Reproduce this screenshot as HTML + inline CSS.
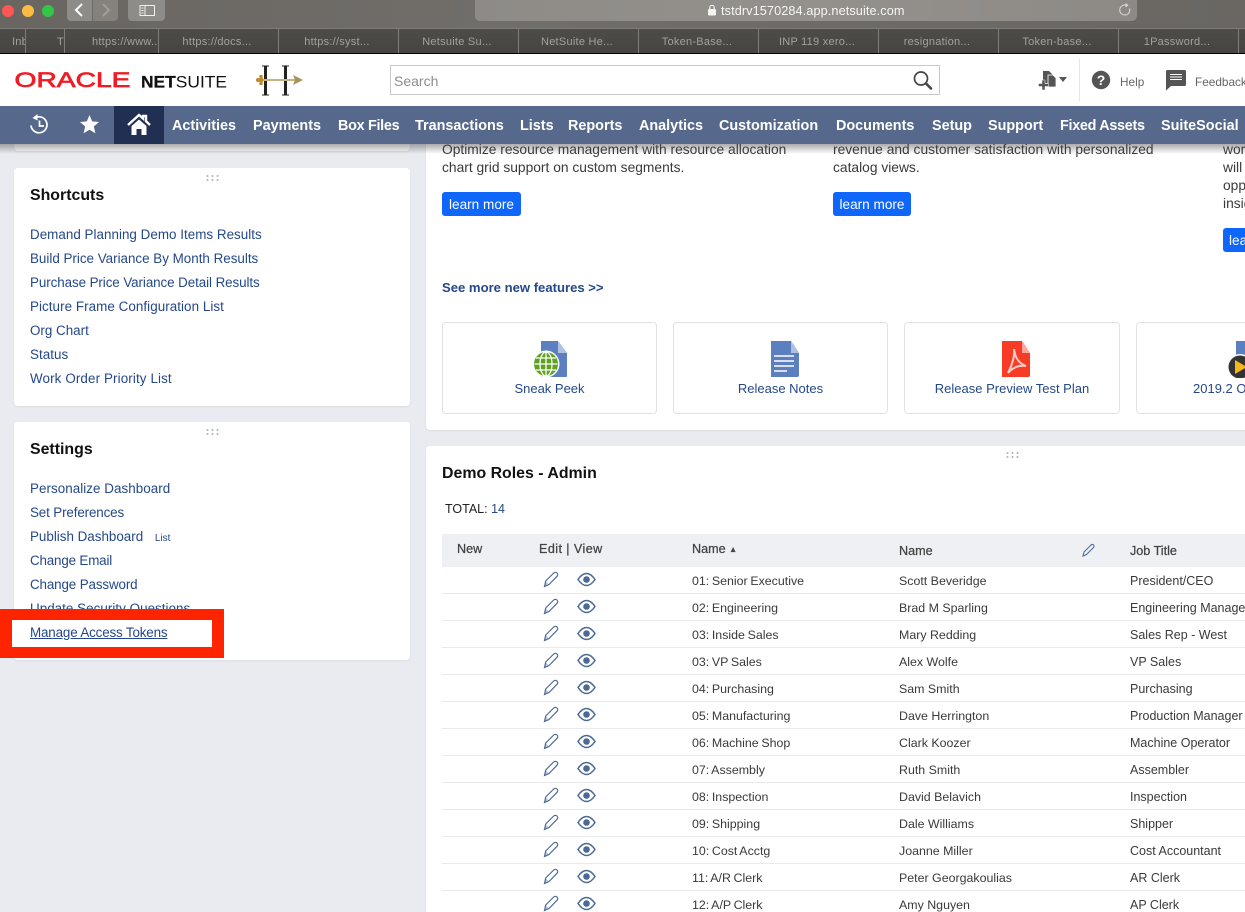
<!DOCTYPE html>
<html><head><meta charset="utf-8"><style>
*{box-sizing:border-box}
html,body{margin:0;padding:0;width:1245px;height:912px;overflow:hidden;background:#e9ebf0;font-family:"Liberation Sans",sans-serif}
#p{position:relative;width:1245px;height:912px;overflow:hidden}
.a{position:absolute}
.t{position:absolute;white-space:nowrap;line-height:20px;height:20px}
.tab{position:absolute;top:29px;height:24px;line-height:26px;color:#a3a19e;font-size:11px;white-space:nowrap;letter-spacing:.25px;overflow:hidden;text-align:center;border-right:1px solid #7f7d7a;padding-right:3px}
.n{position:absolute;top:116px;height:20px;line-height:20px;color:#fff;font-weight:bold;font-size:14.4px;white-space:nowrap}
.card{position:absolute;background:#fff;border-radius:4px;box-shadow:0 1px 2px rgba(0,0,0,.06)}
.l{position:absolute;left:30px;color:#24488a;font-size:13.4px;line-height:20px;white-space:nowrap;margin-top:1px}
.h{position:absolute;color:#111;font-size:15.9px;font-weight:bold;line-height:22px;white-space:nowrap;margin-top:1px}
.p{position:absolute;color:#3a3a3a;font-size:13.8px;line-height:18px;white-space:nowrap;margin-top:1px}
.b{position:absolute;height:24px;background:#0f66fa;color:#fff;border-radius:3px;font-size:13.6px;line-height:26px;text-align:center;white-space:nowrap}
.tile{position:absolute;top:322px;height:92px;border:1px solid #dfe1e5;border-radius:4px;background:#fff}
.tile span{position:absolute;left:0;right:0;top:56px;text-align:center;color:#24488a;font-size:13px;line-height:20px;white-space:nowrap}
.tile svg{position:absolute}
.r{position:absolute;left:442px;width:803px;height:27px;border-bottom:1px solid #e9eaee;font-size:12.4px;color:#3a3a3a}
.r b{position:absolute;font-weight:normal;top:4px;line-height:20px;white-space:nowrap}
.r b:nth-of-type(1){left:250px;word-spacing:-.8px}.r b:nth-of-type(2){left:457px}.r b:nth-of-type(3){left:688px;font-size:12.5px}
.r svg{position:absolute;top:4px}
.th{position:absolute;color:#444;font-size:12.6px;line-height:20px;white-space:nowrap;font-weight:normal;-webkit-text-stroke:.25px #444}
.grip{position:absolute;width:15px;height:8px;background-image:radial-gradient(circle,#b5b7bc 1px,transparent 1.1px);background-size:5px 4px}
</style></head><body><div id="p">

<div class="a" style="left:0;top:0;width:1245px;height:29px;background:linear-gradient(90deg,#696662,#716e6a 40%,#6a6763);border-bottom:1px solid #7d7b78"></div>
<div class="a" style="left:2px;top:5px;width:12px;height:12px;border-radius:50%;background:#fc5753"></div>
<div class="a" style="left:22px;top:5px;width:12px;height:12px;border-radius:50%;background:#fdbc40"></div>
<div class="a" style="left:42px;top:5px;width:12px;height:12px;border-radius:50%;background:#33c748"></div>
<div class="a" style="left:67px;top:0;width:25px;height:21px;background:#8e8c88;border-radius:0 0 0 4px"></div>
<div class="a" style="left:93px;top:0;width:25px;height:21px;background:#85827e;border-radius:0 0 4px 0"></div>
<div class="a" style="left:128px;top:0;width:37px;height:21px;background:#8e8c88;border-radius:0 0 4px 4px"></div>
<svg class="a" style="left:67px;top:0" width="100" height="21"><path d="M15 4 L9 10 L15 16" fill="none" stroke="#fff" stroke-width="2"/><path d="M36 4 L42 10 L36 16" fill="none" stroke="#a09e9a" stroke-width="2"/><path d="M73 5.5h14.500v10H73zM78 5.500v10M74.500 8h2M74.500 10.500h2M74.500 13h2" fill="none" stroke="#f0f0ef" stroke-width="1"/></svg>
<div class="a" style="left:475px;top:0;width:662px;height:21px;background:linear-gradient(90deg,#8e8b87,#94918d 50%,#8d8a86);border-radius:0 0 5px 5px"></div>
<svg class="a" style="left:707px;top:4px" width="11" height="12"><rect x="1" y="5" width="8" height="6.500" rx="1" fill="#f3f3f2"/><path d="M2.800 5V3.500a2.200 2.200 0 0 1 4.400 0V5" fill="none" stroke="#f3f3f2" stroke-width="1.200"/></svg>
<div class="t" style="left:721px;top:1px;color:#f6f6f5;font-size:12.700px;letter-spacing:.1px">tstdrv1570284.app.netsuite.com</div>
<svg class="a" style="left:1118px;top:3px" width="14" height="14"><path d="M11.500 5.500A5 5 0 1 1 8 2.200" fill="none" stroke="#dddcda" stroke-width="1"/><path d="M7.500 0v4.500L10.500 2.300z" fill="#dddcda"/></svg>

<div class="a" style="left:0;top:29px;width:1245px;height:24px;background:linear-gradient(#4e4c49,#474542)"></div>
<div class="tab" style="left:0;width:26px;text-align:left;padding-left:12px;padding-right:0">Inb</div>
<div class="tab" style="left:26px;width:39px;text-align:left;padding-left:31px;padding-right:0">T</div>
<div class="tab" style="left:65px;width:94px;padding-left:27px;padding-right:0;text-align:left">https://www...</div>
<div class="tab" style="left:159px;width:120px">https://docs...</div>
<div class="tab" style="left:279px;width:120px">https://syst...</div>
<div class="tab" style="left:399px;width:120px">Netsuite Su...</div>
<div class="tab" style="left:519px;width:120px">NetSuite He...</div>
<div class="tab" style="left:639px;width:120px">Token-Base...</div>
<div class="tab" style="left:759px;width:120px">INP 119 xero...</div>
<div class="tab" style="left:879px;width:120px">resignation...</div>
<div class="tab" style="left:999px;width:120px">Token-base...</div>
<div class="tab" style="left:1119px;width:120px">1Password...</div>
<div class="a" style="left:0;top:53px;width:1245px;height:1px;background:#000"></div>

<div class="a" style="left:0;top:54px;width:1245px;height:52px;background:#fff"></div>
<svg class="a" style="left:0;top:54px" width="330" height="52">
<text x="14.500" y="33" font-family="Liberation Sans" font-size="21.500" fill="#ee1c25" stroke="#ee1c25" stroke-width=".7" textLength="116" lengthAdjust="spacingAndGlyphs">ORACLE</text>
<text x="141" y="33.500" font-family="Liberation Sans" font-size="17" fill="#111" textLength="86" lengthAdjust="spacingAndGlyphs"><tspan font-weight="bold" stroke="#111" stroke-width=".3">NET</tspan>SUITE</text>
<rect x="264" y="12" width="3" height="29" fill="#222"/><rect x="284" y="12" width="3" height="29" fill="#222"/>
<rect x="262" y="11.500" width="7" height="1" fill="#222"/><rect x="262" y="40.500" width="7" height="1" fill="#222"/><rect x="282" y="11.500" width="7" height="1" fill="#222"/><rect x="282" y="40.500" width="7" height="1" fill="#222"/>
<rect x="262" y="25" width="34" height="2" fill="#c4b184"/>
<circle cx="261" cy="26" r="2.500" fill="#c4872a"/><circle cx="258" cy="26" r="2" fill="#c4872a"/><circle cx="261" cy="22.500" r="1.800" fill="#c4872a"/><circle cx="261" cy="29.500" r="1.800" fill="#c4872a"/>
<path d="M293 21l10 5-10 5 2-5z" fill="#a8925e"/>
</svg>
<div class="a" style="left:390px;top:65px;width:550px;height:30px;border:1px solid #c9c9c9;background:#fff"></div>
<div class="t" style="left:394px;top:71px;color:#8d8d8d;font-size:14px">Search</div>
<svg class="a" style="left:911px;top:69px" width="24" height="22"><circle cx="10" cy="9.500" r="6.500" fill="none" stroke="#444" stroke-width="1.700"/><path d="M15 14.500l5 5" stroke="#444" stroke-width="2.600" stroke-linecap="round"/></svg>
<svg class="a" style="left:1037px;top:69px" width="32" height="24"><path d="M6 2h6l4 4v8H6z" fill="#555"/><path d="M11 6h5l3 3v9h-8z" fill="#555" stroke="#fff" stroke-width=".8"/><path d="M5 11h3v3.500h3.500v3H8V21H5v-3.500H1.500v-3H5z" fill="#555" stroke="#fff" stroke-width=".5"/><path d="M22 8h8l-4 5z" fill="#555"/></svg>
<div class="a" style="left:1079px;top:59px;width:1px;height:42px;background:#e4e4e4"></div>
<svg class="a" style="left:1091px;top:70px" width="20" height="20"><circle cx="10" cy="10" r="9.200" fill="#555"/><text x="10" y="15" text-anchor="middle" font-family="Liberation Sans" font-weight="bold" font-size="14" fill="#fff">?</text></svg>
<div class="t" style="left:1120px;top:72px;color:#666;font-size:11.800px">Help</div>
<svg class="a" style="left:1165px;top:69px" width="23" height="22"><path d="M2.500 1h17A1.500 1.500 0 0 1 21 2.500v13a1.500 1.500 0 0 1-1.500 1.500H6L1 21.500V2.500A1.500 1.500 0 0 1 2.500 1z" fill="#555"/><path d="M5 5.500h12M5 8h12M5 10.500h12" stroke="#fff" stroke-width="1"/></svg>
<div class="t" style="left:1195px;top:72px;color:#666;font-size:11.800px">Feedback</div>

<!-- Cards -->
<div class="card" style="left:14px;top:130px;width:396px;height:21px"></div>
<div class="card" style="left:14px;top:168px;width:396px;height:238px"></div>
<div class="grip" style="left:205px;top:174px"></div>
<div class="h" style="left:30px;top:184px">Shortcuts</div>
<div class="l" style="top:224px;letter-spacing:.03px">Demand Planning Demo Items Results</div>
<div class="l" style="top:248px">Build Price Variance By Month Results</div>
<div class="l" style="top:272px;letter-spacing:-.08px">Purchase Price Variance Detail Results</div>
<div class="l" style="top:296px;letter-spacing:.06px">Picture Frame Configuration List</div>
<div class="l" style="top:320px">Org Chart</div>
<div class="l" style="top:344px;letter-spacing:.05px">Status</div>
<div class="l" style="top:368px;letter-spacing:.12px">Work Order Priority List</div>

<div class="card" style="left:14px;top:422px;width:396px;height:238px"></div>
<div class="grip" style="left:205px;top:428px"></div>
<div class="h" style="left:30px;top:438px">Settings</div>
<div class="l" style="top:478px;letter-spacing:.05px">Personalize Dashboard</div>
<div class="l" style="top:502px;letter-spacing:-.13px">Set Preferences</div>
<div class="l" style="top:526px">Publish Dashboard <span style="font-size:10px;margin-left:8px">List</span></div>
<div class="l" style="top:550px;letter-spacing:-.17px">Change Email</div>
<div class="l" style="top:574px;letter-spacing:-.13px">Change Password</div>
<div class="l" style="top:598px;letter-spacing:.04px">Update Security Questions</div>
<div class="a" style="left:0;top:609px;width:224px;height:49px;border:12px solid #ff2400;border-top-width:11px;border-bottom-width:11px;background:#fff"></div>
<div class="l" style="top:622px;text-decoration:underline;letter-spacing:-.15px">Manage Access Tokens</div>

<div class="card" style="left:426px;top:130px;width:830px;height:300px"></div>
<div class="p" style="left:442px;top:140px">Optimize resource management with resource allocation</div>
<div class="p" style="left:442px;top:158px">chart grid support on custom segments.</div>
<div class="b" style="left:442px;top:192px;width:79px">learn more</div>
<div class="p" style="left:833px;top:140px">revenue and customer satisfaction with personalized</div>
<div class="p" style="left:833px;top:158px">catalog views.</div>
<div class="b" style="left:833px;top:192px;width:78px">learn more</div>
<div class="p" style="left:1223px;top:140px">work</div>
<div class="p" style="left:1223px;top:158px">will</div>
<div class="p" style="left:1223px;top:176px">opp</div>
<div class="p" style="left:1223px;top:194px">insig</div>
<div class="b" style="left:1223px;top:228px;width:60px;text-align:left;padding-left:6px">learn more</div>
<div class="p" style="left:442px;top:278px;color:#24488a;font-weight:bold;font-size:13.100px">See more new features &gt;&gt;</div>

<div class="tile" style="left:442px;width:215px"><svg style="left:88px;top:17px" width="40" height="38"><path d="M10 1h17l9 12v23a1 1 0 0 1-1 1H10z" fill="#5b7fbf"/><path d="M27 1l9 12h-9z" fill="#aec1e0"/><circle cx="15" cy="24" r="13.500" fill="#fff"/><circle cx="15" cy="24" r="12" fill="#5fa21f"/><g fill="none" stroke="#fff" stroke-width="1.300"><ellipse cx="15" cy="24" rx="6" ry="12"/><path d="M15 12v24M3.500 24h23M5 18h20M5 30h20"/></g></svg><span>Sneak Peek</span></div>
<div class="tile" style="left:673px;width:215px"><svg style="left:96px;top:17px" width="30" height="38"><path d="M1 1h20l8 12v22a2 2 0 0 1-2 2H1z" fill="#5b7fbf"/><path d="M21 1l8 12h-8z" fill="#aec1e0"/><path d="M4 15h20v2H4zM4 20h20v2H4zM4 25h20v2H4zM4 30h13v2H4z" fill="#d6e0f0"/></svg><span>Release Notes</span></div>
<div class="tile" style="left:904px;width:216px"><svg style="left:96px;top:17px" width="30" height="38"><path d="M1 1h20l8 12v22a2 2 0 0 1-2 2H1z" fill="#f73c26"/><path d="M21 1l8 12h-8z" fill="#fba79c"/><path d="M13 9c1 8 4 14 12 17-7-1-13 1-18 7 3-6 7-16 6-24z" fill="none" stroke="#fbcfc8" stroke-width="2"/></svg><span>Release Preview Test Plan</span></div>
<div class="tile" style="left:1136px;width:215px"><svg style="left:88px;top:17px" width="40" height="38"><path d="M11 1h17l9 12v23a1 1 0 0 1-1 1H11z" fill="#5b7fbf"/><circle cx="15" cy="27" r="13" fill="#fff"/><circle cx="15" cy="27" r="11.500" fill="#333"/><path d="M10 20l12 7-12 7z" fill="#f5b81c"/></svg><span style="left:56px;right:auto;text-align:left">2019.2 Overview</span></div>

<!-- Roles -->
<div class="card" style="left:426px;top:446px;width:830px;height:480px"></div>
<div class="grip" style="left:1005px;top:451px"></div>
<div class="h" style="left:442px;top:462px">Demo Roles - Admin</div>
<div class="t" style="left:445px;top:499px;color:#222;font-size:12.500px">TOTAL: <span style="color:#24488a">14</span></div>
<div class="a" style="left:442px;top:534px;width:803px;height:33px;background:#eff0f4"></div>
<div class="th" style="left:457px;top:539px">New</div>
<div class="th" style="left:539px;top:539px;letter-spacing:.42px">Edit | View</div>
<div class="th" style="left:692px;top:539px">Name <span style="font-size:8px;vertical-align:1px">▲</span></div>
<div class="th" style="left:899px;top:541px">Name</div>
<svg class="a" style="left:1081px;top:543px" width="15" height="15"><path d="M2 13l1-4L10 2a1.500 1.500 0 0 1 2.500 2.500L5.500 11.500z" fill="none" stroke="#52709c" stroke-width="1.100"/></svg>
<div class="th" style="left:1130px;top:541px">Job Title</div>

<svg width="0" height="0" style="position:absolute"><defs>
<g id="pen"><path d="M1.500 15.500L2.700 10 10.700 2a2.200 2.200 0 0 1 3.300 3.300L6 13.500z" fill="none" stroke="#4c6a96" stroke-width="1.200"/><path d="M1.500 15.500L2.700 10l3.300 3.500z" fill="#4c6a96" fill-opacity=".35"/></g>
<g id="eye"><path d="M1 7.500C4 3 7 1.500 9.500 1.500S15 3 18 7.500C15 12 12 13.500 9.500 13.500S4 12 1 7.500z" fill="none" stroke="#4c6a96" stroke-width="1.500"/><circle cx="9.500" cy="7.500" r="3.300" fill="#4c6a96"/></g>
</defs></svg>

<div class="r" style="top:567px"><svg style="left:101px" width="18" height="18"><use href="#pen"/></svg><svg style="left:135px;top:5px" width="19" height="15"><use href="#eye"/></svg><b>01: Senior Executive</b><b>Scott Beveridge</b><b>President/CEO</b></div>
<div class="r" style="top:594px"><svg style="left:101px" width="18" height="18"><use href="#pen"/></svg><svg style="left:135px;top:5px" width="19" height="15"><use href="#eye"/></svg><b>02: Engineering</b><b>Brad M Sparling</b><b>Engineering Manager</b></div>
<div class="r" style="top:621px"><svg style="left:101px" width="18" height="18"><use href="#pen"/></svg><svg style="left:135px;top:5px" width="19" height="15"><use href="#eye"/></svg><b>03: Inside Sales</b><b>Mary Redding</b><b>Sales Rep - West</b></div>
<div class="r" style="top:648px"><svg style="left:101px" width="18" height="18"><use href="#pen"/></svg><svg style="left:135px;top:5px" width="19" height="15"><use href="#eye"/></svg><b>03: VP Sales</b><b>Alex Wolfe</b><b>VP Sales</b></div>
<div class="r" style="top:675px"><svg style="left:101px" width="18" height="18"><use href="#pen"/></svg><svg style="left:135px;top:5px" width="19" height="15"><use href="#eye"/></svg><b>04: Purchasing</b><b>Sam Smith</b><b>Purchasing</b></div>
<div class="r" style="top:702px"><svg style="left:101px" width="18" height="18"><use href="#pen"/></svg><svg style="left:135px;top:5px" width="19" height="15"><use href="#eye"/></svg><b>05: Manufacturing</b><b>Dave Herrington</b><b>Production Manager</b></div>
<div class="r" style="top:729px"><svg style="left:101px" width="18" height="18"><use href="#pen"/></svg><svg style="left:135px;top:5px" width="19" height="15"><use href="#eye"/></svg><b>06: Machine Shop</b><b>Clark Koozer</b><b>Machine Operator</b></div>
<div class="r" style="top:756px"><svg style="left:101px" width="18" height="18"><use href="#pen"/></svg><svg style="left:135px;top:5px" width="19" height="15"><use href="#eye"/></svg><b>07: Assembly</b><b>Ruth Smith</b><b>Assembler</b></div>
<div class="r" style="top:783px"><svg style="left:101px" width="18" height="18"><use href="#pen"/></svg><svg style="left:135px;top:5px" width="19" height="15"><use href="#eye"/></svg><b>08: Inspection</b><b>David Belavich</b><b>Inspection</b></div>
<div class="r" style="top:810px"><svg style="left:101px" width="18" height="18"><use href="#pen"/></svg><svg style="left:135px;top:5px" width="19" height="15"><use href="#eye"/></svg><b>09: Shipping</b><b>Dale Williams</b><b>Shipper</b></div>
<div class="r" style="top:837px"><svg style="left:101px" width="18" height="18"><use href="#pen"/></svg><svg style="left:135px;top:5px" width="19" height="15"><use href="#eye"/></svg><b>10: Cost Acctg</b><b>Joanne Miller</b><b>Cost Accountant</b></div>
<div class="r" style="top:864px"><svg style="left:101px" width="18" height="18"><use href="#pen"/></svg><svg style="left:135px;top:5px" width="19" height="15"><use href="#eye"/></svg><b>11: A/R Clerk</b><b>Peter Georgakoulias</b><b>AR Clerk</b></div>
<div class="r" style="top:891px"><svg style="left:101px" width="18" height="18"><use href="#pen"/></svg><svg style="left:135px;top:5px" width="19" height="15"><use href="#eye"/></svg><b>12: A/P Clerk</b><b>Amy Nguyen</b><b>AP Clerk</b></div>

<!-- Nav on top -->
<div class="a" style="left:0;top:144px;width:1245px;height:10px;background:linear-gradient(rgba(70,70,70,.45),rgba(70,70,70,0))"></div>
<div class="a" style="left:0;top:106px;width:1245px;height:38px;background:#56698c"></div>
<div class="a" style="left:114px;top:106px;width:50px;height:38px;background:#202f52"></div>
<svg class="a" style="left:29px;top:113px" width="20" height="22"><path d="M5 5.500A8 8 0 1 1 2 12.500" fill="none" stroke="#fff" stroke-width="1.700"/><path d="M8.500 1v6.500L3.500 5z" fill="#fff"/><path d="M10.500 7.500v5.500h4.500" fill="none" stroke="#fff" stroke-width="1.700"/></svg>
<svg class="a" style="left:79px;top:114px" width="21" height="20"><path d="M10.500 1l2.700 6.400 6.800.6-5.200 4.500 1.600 6.800-5.900-3.600-5.900 3.600 1.600-6.800L1 8l6.800-.6z" fill="#fff"/></svg>
<svg class="a" style="left:127px;top:113px" width="24" height="24"><path d="M1 12L12 2l4 3.500V3h3v5.200L23 12" fill="none" stroke="#fff" stroke-width="2.400"/><path d="M4.500 13L12 6.500 19.500 13v9h-5v-6h-5v6h-5z" fill="#fff"/></svg>
<div class="n" style="left:172px">Activities</div>
<div class="n" style="left:253px">Payments</div>
<div class="n" style="left:338px;letter-spacing:-.3px">Box Files</div>
<div class="n" style="left:415px">Transactions</div>
<div class="n" style="left:520px">Lists</div>
<div class="n" style="left:568px">Reports</div>
<div class="n" style="left:639px">Analytics</div>
<div class="n" style="left:719px">Customization</div>
<div class="n" style="left:836px">Documents</div>
<div class="n" style="left:932px">Setup</div>
<div class="n" style="left:988px">Support</div>
<div class="n" style="left:1060px;letter-spacing:-.3px">Fixed Assets</div>
<div class="n" style="left:1161px">SuiteSocial</div>
</div></body></html>
